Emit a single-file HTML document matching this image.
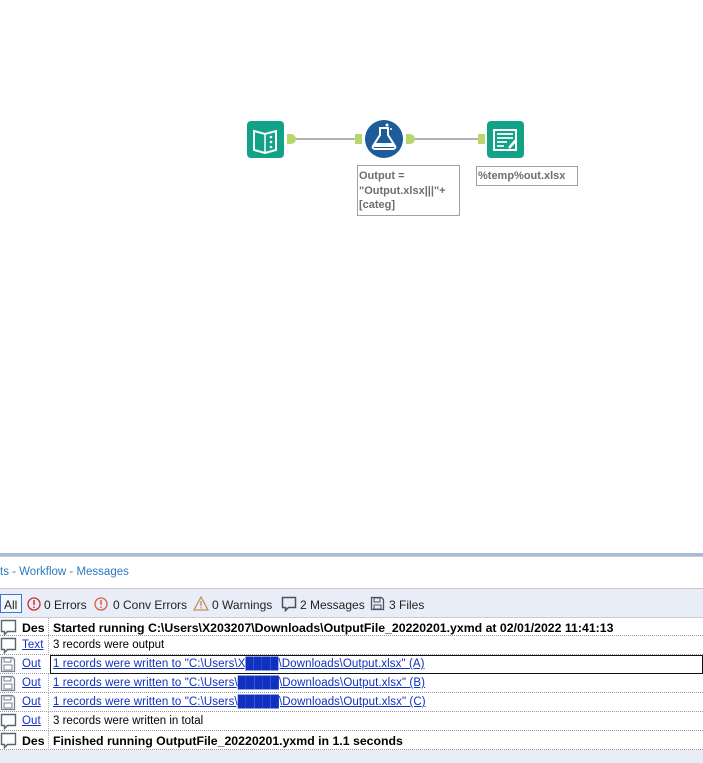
<!DOCTYPE html>
<html><head><style>
body{margin:0;width:703px;height:763px;position:relative;background:#fff;font-family:"Liberation Sans",sans-serif;overflow:hidden}
.a{position:absolute}
.ann{position:absolute;border:1px solid #a0a0a0;background:#fff;color:#6e6e6e;font-weight:bold;font-size:11px;line-height:14.5px;padding:3px 1px;box-sizing:border-box}
.tb{position:absolute;top:588px;left:0;width:703px;height:29px;background:#e9edf7;border-top:1px solid #c8c8c8;font-size:12px}
.tb span{position:absolute;top:9px;color:#222}
.row{position:absolute;left:0;width:703px;height:19px;font-size:11.5px;border-bottom:1px dotted #999;box-sizing:border-box}
.row .t{position:absolute;left:22px;top:3px}
.row .m{position:absolute;left:53px;top:3px;white-space:nowrap}
.row .sep{position:absolute;left:48px;top:0;height:19px;border-left:1px dotted #9ab}
.lk{color:#1030c0;text-decoration:underline;letter-spacing:0.1px}
b{font-weight:bold;font-size:12.3px}
</style></head><body>
<svg class="a" style="left:0;top:0" width="703" height="250">
<line x1="294" y1="139" x2="358" y2="139" stroke="#999" stroke-width="1.5"/>
<line x1="414" y1="139" x2="480" y2="139" stroke="#999" stroke-width="1.5"/>
<rect x="247" y="121" width="37" height="37" rx="4" fill="#12a287"/>
<path d="M254 131 L254 150 L265 153 L276 150 L276 131 L265 134 Z" fill="none" stroke="#fff" stroke-width="2"/>
<line x1="265" y1="134" x2="265" y2="153" stroke="#fff" stroke-width="1.5"/>
<circle cx="271" cy="137" r="1.3" fill="#fff"/><circle cx="271" cy="142" r="1.3" fill="#fff"/><circle cx="271" cy="147" r="1.3" fill="#fff"/>
<path d="M287 134h4a5 5 0 0 1 0 10h-4z" fill="#b7d66b"/>
<path d="M355 134h7v10h-7z" fill="#b7d66b"/>
<circle cx="384" cy="139" r="19" fill="#1d5c98"/>
<path d="M380 128v7l-7 11a2 2 0 0 0 2 3h18a2 2 0 0 0 2-3l-7-11v-7z" fill="none" stroke="#fff" stroke-width="2"/>
<path d="M375 143h18l2 4H373z" fill="#fff"/>
<circle cx="387" cy="125" r="1.5" fill="#fff"/><circle cx="391" cy="129" r="1" fill="#fff"/>
<path d="M406 134h4a5 5 0 0 1 0 10h-4z" fill="#b7d66b"/>
<path d="M478 134h7v10h-7z" fill="#b7d66b"/>
<rect x="487" y="121" width="37" height="37" rx="4" fill="#12a287"/>
<path d="M494 130h22v20h-22z" fill="none" stroke="#fff" stroke-width="2"/>
<path d="M497 134h16M497 138h16M497 142h10M497 146h7" stroke="#fff" stroke-width="1.8"/>
<path d="M509 148l7-8" stroke="#fff" stroke-width="2.5"/>
</svg>
<div class="ann" style="left:357px;top:165px;width:103px;height:51px">Output =<br>"Output.xlsx|||"+<br>[categ]</div>
<div class="ann" style="left:476px;top:166px;width:102px;height:20px;padding-top:2px">%temp%out.xlsx</div>

<div class="a" style="left:0;top:553px;width:703px;height:3px;background:#a9bad8"></div>
<div class="a" style="left:0;top:556px;width:703px;height:1px;background:#ccc"></div>
<div class="a" style="left:0;top:566px;font-size:11.5px;color:#2a7ac0">ts - Workflow - Messages</div>
<div class="tb">
<div class="a" style="left:0;top:5px;width:22px;height:19px;border:1px solid #3a7ad0;box-sizing:border-box;background:#f4f6fb"></div>
<span style="left:4px">All</span>
<svg class="a" style="left:27px;top:8px" width="14" height="14"><circle cx="7" cy="7" r="6" fill="none" stroke="#c83030" stroke-width="1.3"/><path d="M7 3v5M7 9.5v1.5" stroke="#c83030" stroke-width="1.5"/></svg>
<span style="left:44px">0 Errors</span>
<svg class="a" style="left:94px;top:8px" width="14" height="14"><circle cx="7" cy="7" r="6" fill="none" stroke="#d86040" stroke-width="1.3"/><path d="M7 3v5M7 9.5v1.5" stroke="#d86040" stroke-width="1.5"/></svg>
<span style="left:113px">0 Conv Errors</span>
<svg class="a" style="left:193px;top:7px" width="16" height="15"><path d="M8 1L15 14H1Z" fill="none" stroke="#c09060" stroke-width="1.3"/><path d="M8 5v5M8 11v1.5" stroke="#c09060" stroke-width="1.3"/></svg>
<span style="left:212px">0 Warnings</span>
<svg class="a" style="left:281px;top:7px" width="16" height="16"><path d="M1.5 1.5h13v10h-7l-3 3v-3h-3z" fill="none" stroke="#4a5260" stroke-width="1.5"/></svg>
<span style="left:300px">2 Messages</span>
<svg class="a" style="left:370px;top:7px" width="15" height="15"><path d="M1.5 1.5h10l2 2v10h-12z" fill="none" stroke="#4a5260" stroke-width="1.3"/><rect x="4" y="2" width="6" height="4" fill="none" stroke="#4a5260"/><rect x="4" y="9" width="7" height="4" fill="none" stroke="#4a5260"/></svg>
<span style="left:389px">3 Files</span>
</div>

<svg width="0" height="0" style="position:absolute"><defs>
<g id="msg"><path d="M1.5 1.5h14v11h-8l-3 3v-3h-3z" fill="#fff" stroke="#5a6270" stroke-width="1.4"/></g>
<g id="fil"><path d="M1.5 1.5h11l2 2v12h-13z" fill="#fff" stroke="#7a8290" stroke-width="1.3"/><rect x="4" y="2" width="7" height="4" fill="none" stroke="#7a8290"/><rect x="4" y="9" width="8" height="5" fill="none" stroke="#7a8290"/></g>
</defs></svg>

<div class="row" style="top:617px;border-top:1px solid #ccc"><svg class="a" style="left:0;top:1px" width="18" height="18"><use href="#msg"/></svg><span class="t"><b>Des</b></span><div class="sep"></div><span class="m"><b>Started running C:\Users\X203207\Downloads\OutputFile_20220201.yxmd at 02/01/2022 11:41:13</b></span></div>
<div class="row" style="top:636px"><svg class="a" style="left:0;top:1px" width="18" height="18"><use href="#msg"/></svg><span class="t lk">Text</span><div class="sep"></div><span class="m">3 records were output</span></div>
<div class="row" style="top:655px"><svg class="a" style="left:0;top:1px" width="18" height="18"><use href="#fil"/></svg><span class="t lk">Out</span><div class="a" style="left:50px;top:0;width:653px;height:19px;border:1px solid #111;box-sizing:border-box"></div><span class="m lk">1 records were written to "C:\Users\X&#9608;&#9608;&#9608;&#9608;\Downloads\Output.xlsx" (A)</span></div>
<div class="row" style="top:674px"><svg class="a" style="left:0;top:1px" width="18" height="18"><use href="#fil"/></svg><span class="t lk">Out</span><div class="sep"></div><span class="m lk">1 records were written to "C:\Users\&#9608;&#9608;&#9608;&#9608;&#9608;\Downloads\Output.xlsx" (B)</span></div>
<div class="row" style="top:693px"><svg class="a" style="left:0;top:1px" width="18" height="18"><use href="#fil"/></svg><span class="t lk">Out</span><div class="sep"></div><span class="m lk">1 records were written to "C:\Users\&#9608;&#9608;&#9608;&#9608;&#9608;\Downloads\Output.xlsx" (C)</span></div>
<div class="row" style="top:712px"><svg class="a" style="left:0;top:1px" width="18" height="18"><use href="#msg"/></svg><span class="t lk">Out</span><div class="sep"></div><span class="m">3 records were written in total</span></div>
<div class="row" style="top:731px"><svg class="a" style="left:0;top:1px" width="18" height="18"><use href="#msg"/></svg><span class="t"><b>Des</b></span><div class="sep"></div><span class="m"><b>Finished running OutputFile_20220201.yxmd in 1.1 seconds</b></span></div>
<div class="a" style="left:0;top:750px;width:703px;height:13px;background:#e9edf7"></div>
</body></html>
